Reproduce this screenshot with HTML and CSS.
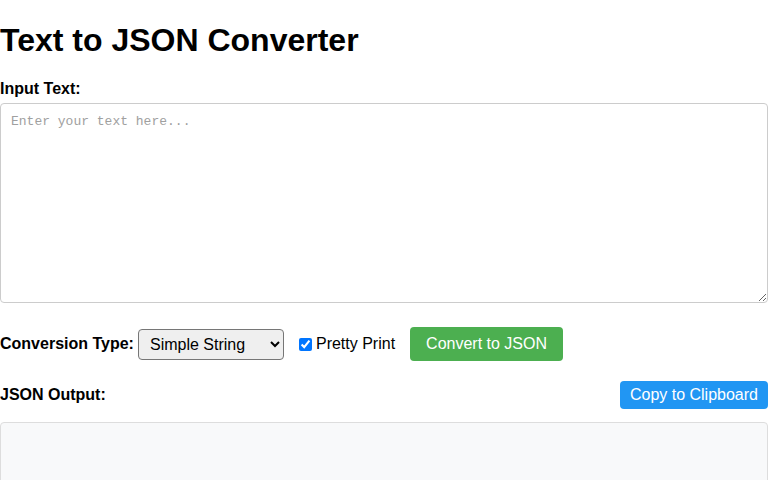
FILE: index.html
```html
<!DOCTYPE html>
<html>
<head>
<meta charset="utf-8">
<link rel="stylesheet" href="styles.css">
</head>
<body>
<h1 class="title">Text to JSON Converter</h1>
<label class="label" for="input">Input Text:</label>
<textarea id="input" class="input" placeholder="Enter your text here..."></textarea>
<div class="controls">
  <label class="label-inline" for="type">Conversion Type:</label>
  <select id="type" class="select">
    <option>Simple String</option>
    <option>Key-Value Pairs</option>
    <option>Array of Lines</option>
  </select>
  <label class="check">
    <input type="checkbox" class="checkbox" checked>
    <span>Pretty Print</span>
  </label>
  <button class="btn btn-green">Convert to JSON</button>
</div>
<div class="output-head">
  <span class="label-inline">JSON Output:</span>
  <button class="btn btn-blue">Copy to Clipboard</button>
</div>
<pre class="output"></pre>
</body>
</html>
```

FILE: styles.css
```css
html, body {
  margin: 0;
  padding: 0;
  background: #fff;
}
body {
  font-family: "Liberation Sans", Arial, sans-serif;
  font-size: 16px;
  color: #000;
}
.title {
  font-size: 32px;
  font-weight: bold;
  margin: 22px 0 21px 0;
}
.label {
  display: block;
  font-weight: bold;
  margin-bottom: 5px;
}
.input {
  display: block;
  box-sizing: border-box;
  width: 100%;
  height: 200px;
  padding: 10px;
  border: 1px solid #ccc;
  border-radius: 4px;
  font-family: "Liberation Mono", monospace;
  font-size: 13px;
  resize: vertical;
  margin: 0;
}
.input::placeholder {
  color: #a0a0a0;
}
.controls {
  display: flex;
  align-items: center;
  margin: 24px 0 20px 0;
}
.label-inline {
  font-weight: bold;
}
.select {
  margin-left: 4px;
  height: 31px;
  width: 146px;
  font-family: "Liberation Sans", Arial, sans-serif;
  font-size: 16px;
  padding: 0 7px;
  border: 1px solid #767676;
  border-radius: 4px;
  background: #efefef;
  color: #000;
}
.check {
  display: flex;
  align-items: center;
  margin-left: 15px;
}
.checkbox {
  width: 13px;
  height: 13px;
  margin: 0 4px 0 0;
  accent-color: #0075ff;
}
.btn {
  border: none;
  color: #fff;
  font-family: "Liberation Sans", Arial, sans-serif;
  font-size: 16px;
  border-radius: 4px;
  cursor: pointer;
}
.btn-green {
  background: #4caf50;
  padding: 8px 16px;
  margin-left: 15px;
  height: 34px;
}
.btn-blue {
  background: #2196f3;
  padding: 5px 10px;
  height: 28px;
}
.output-head {
  display: flex;
  justify-content: space-between;
  align-items: center;
  margin-bottom: 13px;
}
.output {
  margin: 0;
  box-sizing: border-box;
  min-height: 200px;
  background: #f8f9fa;
  border: 1px solid #ddd;
  border-radius: 4px;
  padding: 10px;
}
```
